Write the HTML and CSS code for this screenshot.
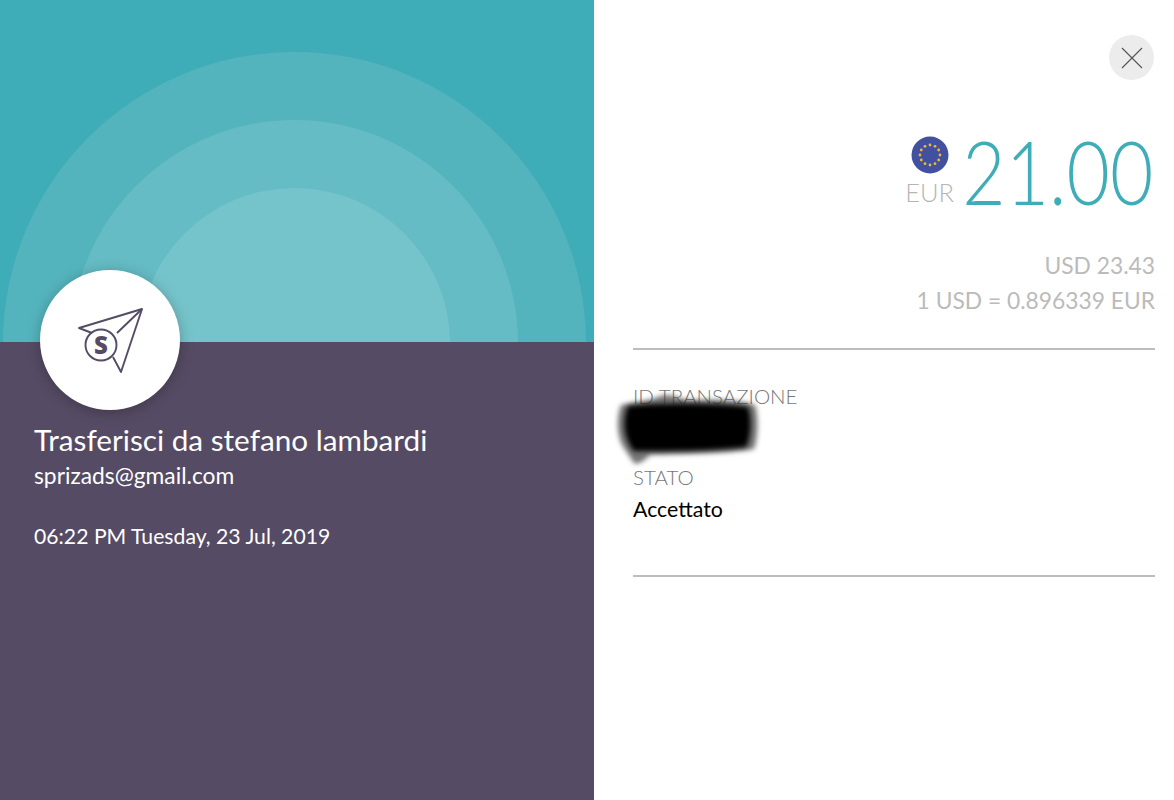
FILE: index.html
```html
<!DOCTYPE html>
<html lang="en">
<head>
    <meta charset="UTF-8">
    <title>Transazione</title>
    <link rel="stylesheet" href="styles.css">
</head>
<body>
    <div class="page">
        <section class="left-panel">
            <div class="hero">
                <div class="ring ring-outer"></div>
                <div class="ring ring-middle"></div>
                <div class="ring ring-inner"></div>
            </div>
            <div class="avatar">
                <svg class="avatar-icon" viewBox="0 0 66 66" width="66" height="66" fill="none" stroke="#554b64" stroke-width="1.9" stroke-linejoin="round">
                    <path d="M15 26 L2 21 L65 2 L44 65 L36 50"/>
                    <path d="M65 2 L40 26"/>
                    <circle cx="24" cy="38" r="15.5"/>
                    <text class="avatar-letter" x="24" y="46.5" text-anchor="middle">S</text>
                </svg>
            </div>
            <div class="sender">
                <h1 class="sender-name">Trasferisci da stefano lambardi</h1>
                <p class="sender-email">sprizads@gmail.com</p>
                <p class="sender-date">06:22 PM Tuesday, 23 Jul, 2019</p>
            </div>
        </section>

        <section class="right-panel">
            <div class="close-row">
                <button class="close-btn" aria-label="Chiudi">
                    <svg viewBox="0 0 22 22" width="22" height="22" stroke="#555" stroke-width="1.1">
                        <path d="M1 1 L21 21 M21 1 L1 21"/>
                    </svg>
                </button>
            </div>

            <div class="amount-row">
                <div class="currency">
                    <svg class="flag" viewBox="0 0 38 38" width="38" height="38">
                        <circle cx="19" cy="19" r="18.5" fill="#41509f"/>
                        <g fill="#eeb63c">
                            <circle cx="19" cy="9" r="1.4"/>
                            <circle cx="24" cy="10.3" r="1.4"/>
                            <circle cx="27.7" cy="14" r="1.4"/>
                            <circle cx="29" cy="19" r="1.4"/>
                            <circle cx="27.7" cy="24" r="1.4"/>
                            <circle cx="24" cy="27.7" r="1.4"/>
                            <circle cx="19" cy="29" r="1.4"/>
                            <circle cx="14" cy="27.7" r="1.4"/>
                            <circle cx="10.3" cy="24" r="1.4"/>
                            <circle cx="9" cy="19" r="1.4"/>
                            <circle cx="10.3" cy="14" r="1.4"/>
                            <circle cx="14" cy="10.3" r="1.4"/>
                        </g>
                    </svg>
                    <span class="currency-code">EUR</span>
                </div>
                <div class="amount"><span class="amount-text">21.00</span></div>
            </div>

            <div class="conversion">
                <p>USD 23.43</p>
                <p>1 USD = 0.896339 EUR</p>
            </div>

            <div class="details">
                <div class="detail">
                    <p class="detail-label">ID TRANSAZIONE</p>
                    <p class="detail-value">2</p>
                    <!-- hand drawn redaction over the id -->
                    <svg class="scribble" viewBox="0 0 160 90" width="160" height="90">
                        <path class="scribble-halo" d="M13 24 C30 20 40 20 50 16 C60 11 66 16 80 19 C110 18 135 19 147 24 C151 35 150 58 146 68 C120 73 70 73 42 74 C36 80 30 84 26 82 C22 76 18 70 14 64 C8 50 9 35 13 24 Z"/>
                        <path class="scribble-core" d="M20 25 C50 22 110 22 140 26 C144 38 143 56 138 66 C105 70 60 70 26 70 C16 58 14 40 20 25 Z"/>
                    </svg>
                </div>
                <div class="detail">
                    <p class="detail-label">STATO</p>
                    <p class="detail-value">Accettato</p>
                </div>
            </div>
        </section>
    </div>
</body>
</html>
```

FILE: styles.css
```css
* {
    box-sizing: border-box;
}

body {
    margin: 0;
    font-family: Lato, "Open Sans", sans-serif;
    background-color: #fff;
}

p,
h1 {
    margin: 0;
    font-weight: 400;
}

.page {
    display: flex;
    height: 800px;
    overflow: hidden;
}

/* left side */
.left-panel {
    position: relative;
    width: 594px;
    background-color: #554b64;
    color: #fff;
}

.hero {
    position: relative;
    height: 342px;
    overflow: hidden;
    background-color: #3fadb7;
}

.ring {
    position: absolute;
    border-radius: 50%;
}

.ring-outer {
    left: 3px;
    top: 52px;
    width: 583px;
    height: 583px;
    background-color: #54b4bd;
}

.ring-middle {
    left: 71px;
    top: 120px;
    width: 447px;
    height: 447px;
    background-color: #65bcc4;
}

.ring-inner {
    left: 139px;
    top: 188px;
    width: 311px;
    height: 311px;
    background-color: #76c4cb;
}

.avatar {
    position: absolute;
    left: 40px;
    top: 270px;
    width: 140px;
    height: 140px;
    display: flex;
    align-items: center;
    justify-content: center;
    background-color: #fff;
    border-radius: 50%;
    box-shadow: 0 2px 14px rgba(0, 0, 0, 0.25);
}

.avatar-letter {
    font-family: "Open Sans", sans-serif;
    font-size: 24px;
    font-weight: 800;
    fill: #554b64;
    stroke: none;
}

.sender {
    padding: 80px 20px 0 34px;
}

.sender-name {
    font-size: 29.7px;
    line-height: 36px;
}

.sender-email {
    margin-top: 2px;
    font-size: 22.8px;
    line-height: 30px;
}

.sender-date {
    margin-top: 31px;
    font-size: 21.2px;
    line-height: 30px;
}

/* right side */
.right-panel {
    flex: 1;
    padding: 35px 19px 0 39px;
}

.close-row {
    display: flex;
    justify-content: flex-end;
}

.close-btn {
    display: flex;
    align-items: center;
    justify-content: center;
    width: 45px;
    height: 45px;
    margin-right: 1px;
    padding: 0;
    border: none;
    border-radius: 50%;
    background-color: #ececec;
}

.amount-row {
    display: flex;
    justify-content: flex-end;
    align-items: flex-end;
    gap: 11px;
    margin-top: 48px;
}

.currency {
    display: flex;
    flex-direction: column;
    align-items: center;
    padding-bottom: 3px;
}

.currency-code {
    font-size: 25.5px;
    font-weight: 300;
    line-height: 37px;
    color: #b5b5b5;
}

.amount {
    display: flex;
    justify-content: flex-end;
    width: 190px;
    padding-right: 2px;
    font-size: 89px;
    font-weight: 300;
    line-height: 86px;
    color: #3fadb7;
}

/* Lato digits are wider than the ones in the screenshot */
.amount-text {
    transform: scaleX(0.84);
    transform-origin: right;
}

.conversion {
    margin-top: 34px;
    padding-bottom: 30px;
    border-bottom: 2px solid #bdbdbd;
    text-align: right;
    font-size: 22.8px;
    font-weight: 300;
    line-height: 35px;
    color: #bbb;
}

.details {
    padding: 30px 0 33px;
    border-bottom: 2px solid #bdbdbd;
}

.detail {
    position: relative;
    margin-bottom: 17px;
}

.detail-label {
    font-size: 20.5px;
    font-weight: 300;
    line-height: 32px;
    color: #777;
}

.detail-value {
    font-size: 21.3px;
    line-height: 32px;
    color: #000;
}

.scribble {
    position: absolute;
    left: -25px;
    top: 1px;
}

.scribble-halo {
    fill: #444;
    fill-opacity: 0.75;
    filter: blur(2.5px);
}

.scribble-core {
    fill: #000;
    filter: blur(2.5px);
}
```
